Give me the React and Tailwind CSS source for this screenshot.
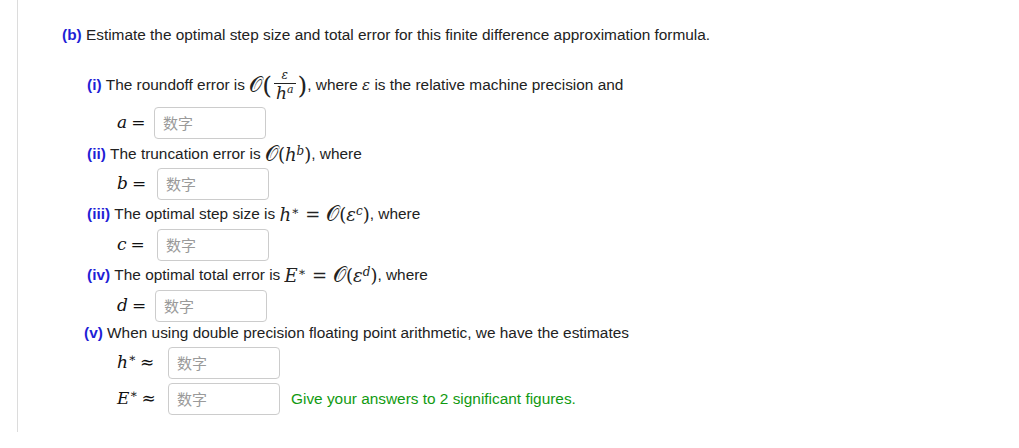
import React from "react";

const math = { fontFamily: '"DejaVu Serif", "Liberation Serif", serif' };

const Cal = () => (
  <span className="text-[21px] leading-none" style={math}>
    𝒪
  </span>
);

const Tag = ({ children }) => (
  <span className="font-bold text-[#1f1fd6]">{children}</span>
);

const Answer = ({ label, rel = "=", mt, labelW, after }) => (
  <div className={`flex items-center h-[32px] ml-[55px] ${mt}`}>
    <span className={`${labelW} shrink-0 text-[17px] text-[#111] whitespace-nowrap`} style={math}>
      {label}
      <span className="ml-[4px]">{rel}</span>
    </span>
    <div
      className="h-[32px] w-[112px] shrink-0 rounded-[4px] border border-[#cccccc] bg-white flex items-center pl-[8px] text-[15px] text-[#9a9a9a]"
      style={{ fontFamily: '"Noto Sans CJK SC", sans-serif' }}
    >
      数字
    </div>
    {after}
  </div>
);

export default function App() {
  return (
    <div
      className="flex h-[448px] w-[1019px] bg-white text-[15.4px] text-[#222]"
      style={{ fontFamily: '"Liberation Sans", Arial, sans-serif' }}
    >
      <div className="ml-[17px] w-px h-[432px] bg-[#dcdcdc]" />
      <div className="pl-[44px] pt-[25px] flex flex-col">
        <p className="h-[20px] leading-[20px] whitespace-nowrap">
          <Tag>(b)</Tag> Estimate the optimal step size and total error for this finite difference approximation formula.
        </p>

        <div className="mt-[25px] ml-[25px] h-[30px] flex items-center whitespace-nowrap">
          <Tag>(i)</Tag>
          <span>&nbsp;The roundoff error is&nbsp;</span>
          <Cal />
          <span className="text-[25px] leading-none" style={math}>(</span>
          <span className="inline-flex flex-col items-center mx-[2px] leading-none" style={math}>
            <span className="italic text-[12px] pb-[2px]">ε</span>
            <span className="border-t border-[#222] px-[2px] pt-[1px] italic text-[17px]">
              h<sup className="text-[11px]">a</sup>
            </span>
          </span>
          <span className="text-[25px] leading-none" style={math}>)</span>
          <span>, where&nbsp;</span>
          <span className="italic text-[15px]" style={math}>ε</span>
          <span>&nbsp;is the relative machine precision and</span>
        </div>

        <Answer label={<i>a</i>} mt="mt-[7px]" labelW="w-[37px]" />

        <div className="mt-[5px] ml-[25px] h-[20px] flex items-center whitespace-nowrap">
          <Tag>(ii)</Tag>
          <span>&nbsp;The truncation error is&nbsp;</span>
          <Cal />
          <span className="text-[18px]" style={math}>
            (<i>h</i>
            <sup className="italic text-[12px]">b</sup>)
          </span>
          <span>, where</span>
        </div>

        <Answer label={<i>b</i>} mt="mt-[4px]" labelW="w-[40px]" />

        <div className="mt-[4px] ml-[25px] h-[20px] flex items-center whitespace-nowrap">
          <Tag>(iii)</Tag>
          <span>&nbsp;The optimal step size is&nbsp;</span>
          <span className="text-[18px]" style={math}>
            <i>h</i>
            <sup className="text-[12px]">∗</sup>
            <span className="mx-[6px]">=</span>
          </span>
          <Cal />
          <span className="text-[18px]" style={math}>
            (<i>ε</i>
            <sup className="italic text-[12px]">c</sup>)
          </span>
          <span>, where</span>
        </div>

        <Answer label={<i>c</i>} mt="mt-[5px]" labelW="w-[40px]" />

        <div className="mt-[4px] ml-[25px] h-[20px] flex items-center whitespace-nowrap">
          <Tag>(iv)</Tag>
          <span>&nbsp;The optimal total error is&nbsp;</span>
          <span className="text-[18px]" style={math}>
            <i>E</i>
            <sup className="text-[12px]">∗</sup>
            <span className="mx-[6px]">=</span>
          </span>
          <Cal />
          <span className="text-[18px]" style={math}>
            (<i>ε</i>
            <sup className="italic text-[12px]">d</sup>)
          </span>
          <span>, where</span>
        </div>

        <Answer label={<i>d</i>} mt="mt-[5px]" labelW="w-[38px]" />

        <div className="mt-[1px] ml-[22px] h-[20px] flex items-center whitespace-nowrap">
          <Tag>(v)</Tag>
          <span>&nbsp;When using double precision floating point arithmetic, we have the estimates</span>
        </div>

        <Answer
          label={
            <>
              <i>h</i>
              <sup className="text-[12px]">∗</sup>
            </>
          }
          rel="≈"
          mt="mt-[4px]"
          labelW="w-[51px]"
        />

        <Answer
          label={
            <>
              <i>E</i>
              <sup className="text-[12px]">∗</sup>
            </>
          }
          rel="≈"
          mt="mt-[4px]"
          labelW="w-[51px]"
          after={
            <span className="ml-[11px] text-[#119a11] whitespace-nowrap">
              Give your answers to 2 significant figures.
            </span>
          }
        />
      </div>
    </div>
  );
}
